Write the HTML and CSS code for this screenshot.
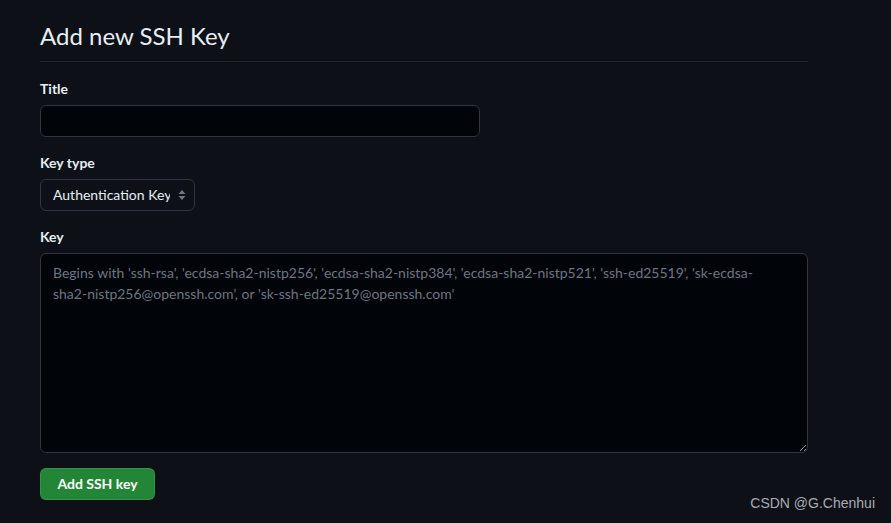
FILE: index.html
```html
<!DOCTYPE html>
<html lang="en">
<head>
<meta charset="utf-8">
<title>Add new SSH Key</title>
<link rel="stylesheet" href="styles.css">
</head>
<body>
<main class="page">
  <div class="subhead">
    <h1 class="subhead-title">Add new SSH Key</h1>
  </div>
  <form class="form">
    <div class="form-group">
      <label class="form-label" for="title">Title</label>
      <input class="form-control title-input" id="title" type="text">
    </div>
    <div class="form-group">
      <label class="form-label" for="keytype">Key type</label>
      <div class="select-wrap">
        <select class="form-select" id="keytype">
          <option>Authentication Key</option>
          <option>Signing Key</option>
        </select>
        <svg class="select-arrows" width="8" height="12" viewBox="0 0 8 12" aria-hidden="true">
          <path d="M4 1 L7.5 5 H0.5 Z" fill="#6e7681"/>
          <path d="M4 11 L7.5 7 H0.5 Z" fill="#6e7681"/>
        </svg>
      </div>
    </div>
    <div class="form-group">
      <label class="form-label" for="key">Key</label>
      <textarea class="form-control key-input" id="key" placeholder="Begins with 'ssh-rsa', 'ecdsa-sha2-nistp256', 'ecdsa-sha2-nistp384', 'ecdsa-sha2-nistp521', 'ssh-ed25519', 'sk-ecdsa-sha2-nistp256@openssh.com', or 'sk-ssh-ed25519@openssh.com'"></textarea>
    </div>
    <button class="btn-primary" type="button">Add SSH key</button>
  </form>
</main>
<div class="watermark">CSDN @G.Chenhui</div>
</body>
</html>
```

FILE: styles.css
```css
html, body {
  margin: 0;
  padding: 0;
  background: #0d1117;
  height: 100%;
  overflow: hidden;
}

body {
  font-family: Lato, "Noto Sans", "Liberation Sans", sans-serif;
  font-size: 14px;
  line-height: 1.5;
  color: #e6edf3;
}

.page {
  width: 768px;
  padding: 18px 0 0 40px;
}

.subhead {
  border-bottom: 1px solid #21262d;
  padding-bottom: 7px;
  margin-bottom: 16px;
}

.subhead-title {
  margin: 0;
  font-size: 24px;
  font-weight: 400;
  line-height: 36px;
  color: #e6edf3;
}

.form-group {
  margin-bottom: 15px;
}

.form-label {
  display: block;
  font-weight: 700;
  font-size: 14px;
  line-height: 21px;
  margin-bottom: 6px;
  color: #e6edf3;
}

.form-control {
  box-sizing: border-box;
  display: block;
  background: #010409;
  border: 1px solid #30363d;
  border-radius: 6px;
  color: #e6edf3;
  font-family: inherit;
  font-size: 14px;
  line-height: 20px;
  padding: 5px 12px;
  outline: none;
}

.title-input {
  width: 440px;
  height: 32px;
}

.select-wrap {
  position: relative;
  display: inline-block;
}

.form-select {
  box-sizing: border-box;
  height: 32px;
  width: 155px;
  appearance: none;
  -webkit-appearance: none;
  background: #0d1117;
  border: 1px solid #30363d;
  border-radius: 6px;
  color: #e6edf3;
  font-family: inherit;
  font-size: 14px;
  line-height: 20px;
  padding: 5px 24px 5px 12px;
  outline: none;
}

.select-arrows {
  position: absolute;
  right: 9px;
  top: 10px;
  pointer-events: none;
}

.key-input {
  width: 768px;
  height: 200px;
  padding: 8px 24px 8px 12px;
  line-height: 21px;
  resize: vertical;
}

.key-input::placeholder {
  color: #6e7681;
  opacity: 1;
}

.btn-primary {
  box-sizing: border-box;
  height: 32px;
  width: 115px;
  padding: 0 12px;
  background: #238636;
  color: #ffffff;
  border: 1px solid rgba(240, 246, 252, 0.1);
  border-radius: 6px;
  font-family: inherit;
  font-size: 14px;
  font-weight: 700;
  line-height: 20px;
  cursor: pointer;
}

.watermark {
  position: absolute;
  right: 16px;
  bottom: 9px;
  font-family: "Liberation Sans", sans-serif;
  font-size: 14px;
  color: #a8abb0;
}
```
